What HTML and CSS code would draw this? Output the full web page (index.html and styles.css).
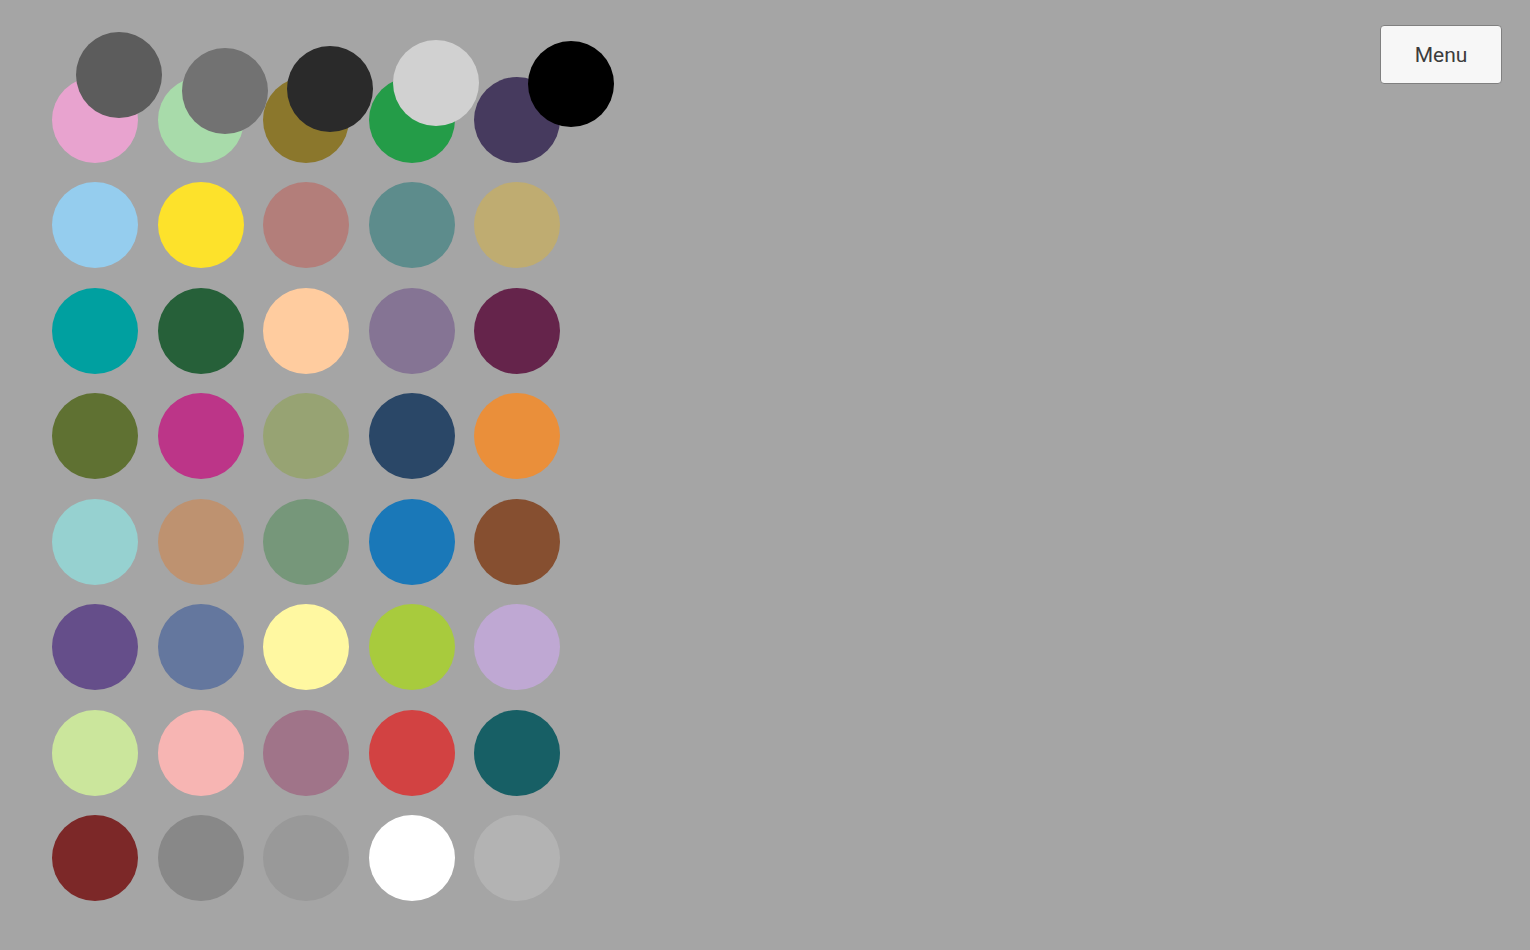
FILE: index.html
```html
<!DOCTYPE html>
<html>
<head>
<meta charset="utf-8">
<link rel="stylesheet" href="styles.css">
</head>
<body>
<div class="stage">
  <div class="grid">
    <div class="dot c1"></div><div class="dot c2"></div><div class="dot c3"></div><div class="dot c4"></div><div class="dot c5"></div>
    <div class="dot c6"></div><div class="dot c7"></div><div class="dot c8"></div><div class="dot c9"></div><div class="dot c10"></div>
    <div class="dot c11"></div><div class="dot c12"></div><div class="dot c13"></div><div class="dot c14"></div><div class="dot c15"></div>
    <div class="dot c16"></div><div class="dot c17"></div><div class="dot c18"></div><div class="dot c19"></div><div class="dot c20"></div>
    <div class="dot c21"></div><div class="dot c22"></div><div class="dot c23"></div><div class="dot c24"></div><div class="dot c25"></div>
    <div class="dot c26"></div><div class="dot c27"></div><div class="dot c28"></div><div class="dot c29"></div><div class="dot c30"></div>
    <div class="dot c31"></div><div class="dot c32"></div><div class="dot c33"></div><div class="dot c34"></div><div class="dot c35"></div>
    <div class="dot c36"></div><div class="dot c37"></div><div class="dot c38"></div><div class="dot c39"></div><div class="dot c40"></div>
  </div>
  <div class="dot free f1"></div>
  <div class="dot free f2"></div>
  <div class="dot free f3"></div>
  <div class="dot free f4"></div>
  <div class="dot free f5"></div>
  <button class="menu">Menu</button>
</div>
</body>
</html>
```
FILE: styles.css
```css
html, body {
  margin: 0;
  padding: 0;
  background: #a5a5a5;
  width: 1530px;
  height: 950px;
  overflow: hidden;
}
.stage {
  position: relative;
  width: 1530px;
  height: 950px;
}
.grid {
  display: grid;
  grid-template-columns: repeat(5, 86px);
  grid-auto-rows: 86px;
  gap: 19.5px;
  padding: 76.5px 0 0 52px;
}
.dot {
  width: 86px;
  height: 86px;
  border-radius: 50%;
}
.c1 { background: #e8a3cf; }
.c2 { background: #a8dbaa; }
.c3 { background: #8b772c; }
.c4 { background: #249c48; }
.c5 { background: #463a5e; }
.c6 { background: #95cdee; }
.c7 { background: #fde22b; }
.c8 { background: #b37e7a; }
.c9 { background: #5d8c8c; }
.c10 { background: #bfac71; }
.c11 { background: #00a0a0; }
.c12 { background: #266039; }
.c13 { background: #ffcc9f; }
.c14 { background: #857494; }
.c15 { background: #65244b; }
.c16 { background: #5f7132; }
.c17 { background: #bc3588; }
.c18 { background: #97a373; }
.c19 { background: #2a4767; }
.c20 { background: #ea8f3a; }
.c21 { background: #96d1d0; }
.c22 { background: #be9270; }
.c23 { background: #76977a; }
.c24 { background: #1a78b8; }
.c25 { background: #864f30; }
.c26 { background: #654e8a; }
.c27 { background: #64779e; }
.c28 { background: #fff8a1; }
.c29 { background: #a8cb3d; }
.c30 { background: #bfa8d3; }
.c31 { background: #cbe69c; }
.c32 { background: #f7b5b3; }
.c33 { background: #a07489; }
.c34 { background: #d24242; }
.c35 { background: #175f65; }
.c36 { background: #7c2828; }
.c37 { background: #888888; }
.c38 { background: #999999; }
.c39 { background: #ffffff; }
.c40 { background: #b3b3b3; }

.free { position: absolute; }
.f1 { left: 76px; top: 31.5px; background: #5c5c5c; }
.f2 { left: 181.5px; top: 48px; background: #727272; }
.f3 { left: 287px; top: 46px; background: #2a2a2a; }
.f4 { left: 393px; top: 39.5px; background: #d1d1d1; }
.f5 { left: 528px; top: 41px; background: #000000; }

.menu {
  position: absolute;
  top: 25px;
  right: 28px;
  width: 122px;
  height: 59px;
  box-sizing: border-box;
  background: #f7f7f7;
  border: 1px solid #808080;
  border-radius: 4px;
  font-family: Roboto, "Liberation Sans", sans-serif;
  font-size: 21px;
  color: #3c3c3c;
  padding: 0;
  padding-top: 1px;
}
```
